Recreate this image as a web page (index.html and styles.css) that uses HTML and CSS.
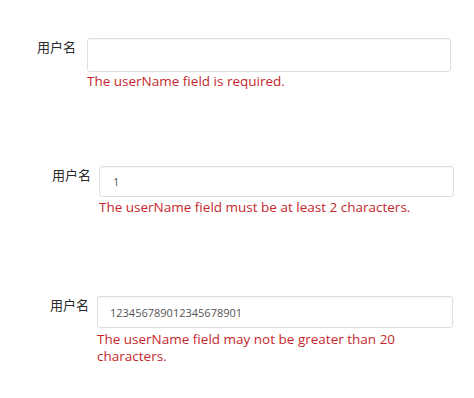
FILE: index.html
```html
<!DOCTYPE html>
<html lang="zh-CN">
<head>
<meta charset="utf-8">
<title>表单验证</title>
<link rel="stylesheet" href="styles.css">
</head>
<body>
  <div class="form-group g1">
    <label class="label">用户名</label>
    <div class="field">
      <input class="input" type="text" value="">
      <div class="error">The userName field is required.</div>
    </div>
  </div>

  <div class="form-group g2">
    <label class="label">用户名</label>
    <div class="field">
      <input class="input" type="text" value="1">
      <div class="error">The userName field must be at least 2 characters.</div>
    </div>
  </div>

  <div class="form-group g3">
    <label class="label">用户名</label>
    <div class="field">
      <input class="input" type="text" value="123456789012345678901">
      <div class="error">The userName field may not be greater than 20 characters.</div>
    </div>
  </div>
</body>
</html>
```

FILE: styles.css
```css
html, body {
  margin: 0;
  padding: 0;
  background: #ffffff;
}

body {
  font-family: "Open Sans", "Noto Sans CJK SC", sans-serif;
  color: #333333;
}

.form-group {
  display: flex;
  align-items: flex-start;
}

.label {
  width: 40px;
  font-family: "Noto Sans CJK SC", sans-serif;
  font-size: 13px;
  line-height: 18px;
  color: #2a2a2a;
  white-space: nowrap;
}

.field {
  display: flex;
  flex-direction: column;
}

.input {
  box-sizing: border-box;
  width: 100%;
  margin: 0;
  border: 1px solid #dedede;
  border-radius: 3px;
  box-shadow: inset 0 1px 1px rgba(0, 0, 0, 0.04);
  padding: 0 12px;
  font-family: "Open Sans", sans-serif;
  font-size: 11px;
  color: #555555;
  background: #ffffff;
  outline: none;
}

.error {
  font-family: "Open Sans", sans-serif;
  font-size: 13.5px;
  line-height: 17px;
  color: #c4282c;
}

.g1 {
  padding: 38px 0 0 37px;
}
.g1 .label {
  margin-right: 10px;
}
.g1 .field {
  width: 364px;
}
.g1 .input {
  height: 34px;
}
.g1 .error {
  margin-top: 1px;
}

.g2 {
  padding: 76px 0 0 52px;
}
.g2 .label {
  margin-right: 7px;
}
.g2 .field {
  width: 355px;
}
.g2 .input {
  height: 31px;
  padding-left: 13px;
}
.g2 .error {
  margin-top: 2px;
}

.g3 {
  padding: 80px 0 0 50px;
}
.g3 .label {
  margin-right: 7px;
}
.g3 .field {
  width: 356px;
}
.g3 .input {
  height: 32px;
}
.g3 .error {
  margin-top: 3px;
}
```
